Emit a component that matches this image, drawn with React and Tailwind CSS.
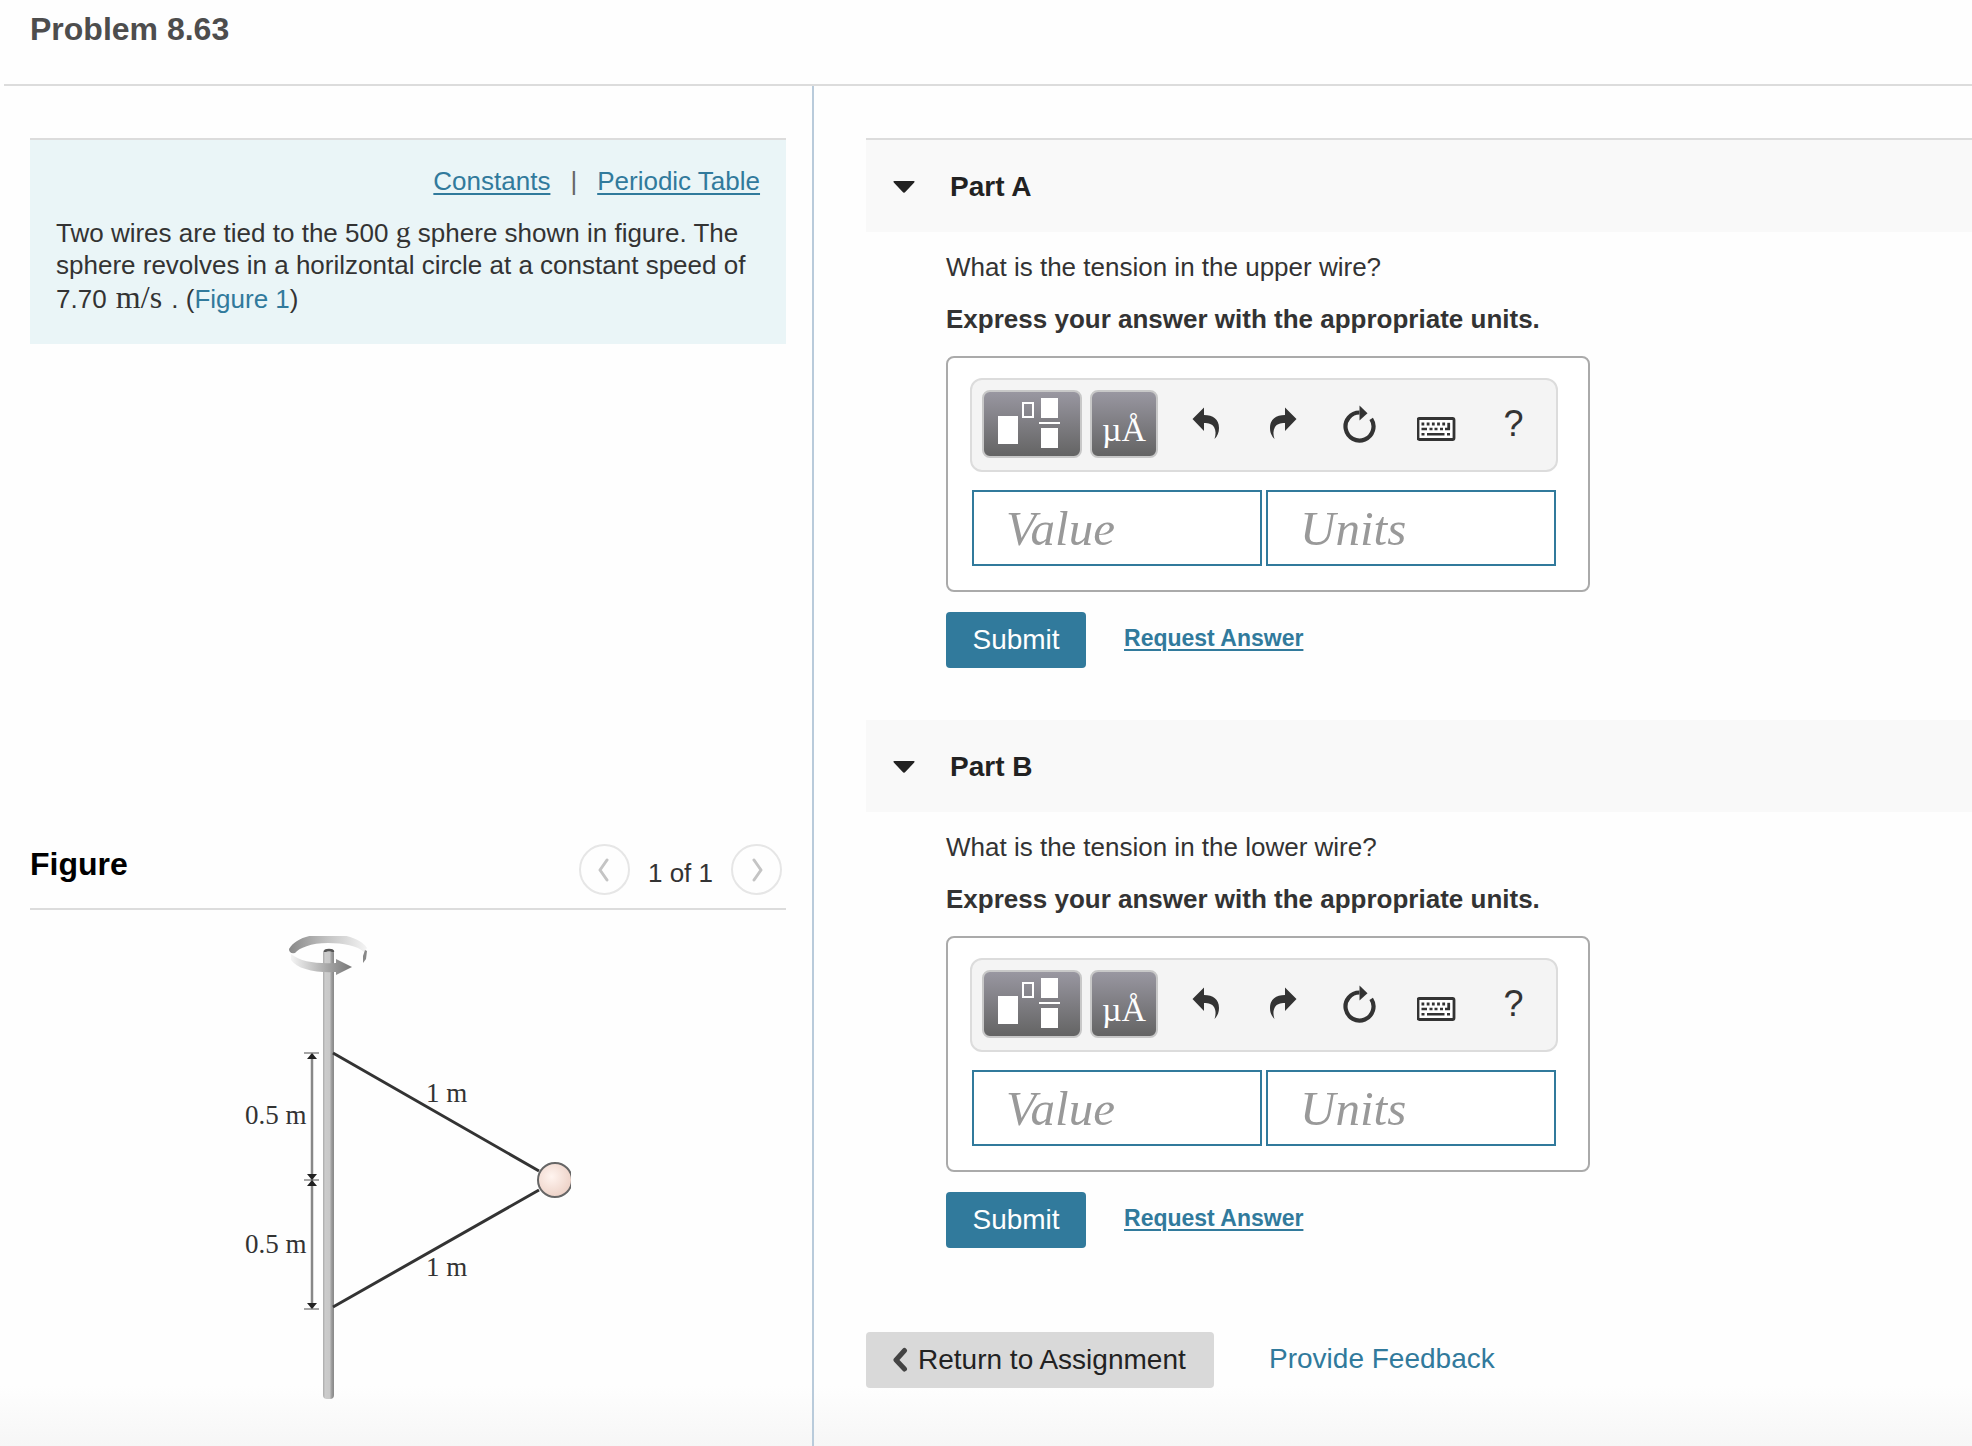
import { useState } from 'react'

const parts = [
  { id: 'a', label: 'Part A', question: 'What is the tension in the upper wire?' },
  { id: 'b', label: 'Part B', question: 'What is the tension in the lower wire?' }
]

function UndoIcon({ className }) {
  return (
    <svg viewBox="0 0 40 40" className={className} fill="#333" aria-hidden="true">
      <path d="M6.500 15 18 3.500V11C27 11 33 15 33 24C33 28.500 31.500 32 28.500 35C30 30.500 30 26.500 28 23C26 20 23 19 18 19V27Z" />
    </svg>
  )
}

function ResetIcon() {
  return (
    <svg viewBox="0 0 40 40" className="size-10" aria-hidden="true">
      <path d="M19.500 8.500A14 14 0 1 0 31.200 14.800" fill="none" stroke="#333" strokeWidth="4.200" />
      <path d="M19.500 1.500 27.500 9.300 19.500 16.500Z" fill="#333" />
    </svg>
  )
}

function KeyboardIcon() {
  return (
    <svg viewBox="0 0 40 40" className="size-10" aria-hidden="true">
      <rect x="1" y="14.500" width="36" height="21" rx="1.500" fill="#fff" stroke="#333" strokeWidth="2.800" />
      <path d="M4.500 20H28.500" stroke="#333" strokeWidth="2.800" strokeDasharray="2.800 2.400" />
      <path d="M4.500 25H10M12.500 25H15.500M17.500 25H20.500M23 25H26M28 25H33M4.500 30.300H7.500M10 30.300H27.500M30 30.300H33" stroke="#333" strokeWidth="2.600" />
      <path d="M31.700 18.800V25.500" stroke="#333" strokeWidth="2.800" />
    </svg>
  )
}

function TemplatesIcon() {
  return (
    <svg viewBox="0 0 96 64" className="h-16 w-24" fill="#fff" aria-hidden="true">
      <rect x="14" y="24" width="20" height="28" />
      <rect x="39" y="11" width="10" height="14" fill="none" stroke="#fff" strokeWidth="2" />
      <rect x="57" y="6" width="17" height="20" />
      <rect x="55" y="30" width="21" height="2" />
      <rect x="57" y="36" width="17" height="20" />
    </svg>
  )
}

function ToolButton({ label, children }) {
  return (
    <button type="button" aria-label={label} className="flex h-[68px] w-[77px] items-center justify-center text-4xl text-[#333]">
      {children}
    </button>
  )
}

function Toolbar() {
  return (
    <div className="flex rounded-xl border-2 border-[#dcdcdc] bg-[#f4f4f4] pt-[10px] pb-3 pl-[10px]">
      <button
        type="button"
        aria-label="Templates"
        className="flex h-[68px] w-[100px] items-center justify-center rounded-lg border-2 border-[#c8c8c8] bg-linear-to-b from-[#9997a1] to-[#646464]"
      >
        <TemplatesIcon />
      </button>
      <button
        type="button"
        aria-label="Symbols"
        className="mr-[9px] ml-2 flex h-[68px] w-[68px] items-center justify-center rounded-lg border-2 border-[#c8c8c8] bg-linear-to-b from-[#9997a1] to-[#646464] pt-3 font-['Liberation_Serif',serif] text-[34px] leading-none text-white"
      >
        µÅ
      </button>
      <ToolButton label="Undo"><UndoIcon className="size-10" /></ToolButton>
      <ToolButton label="Redo"><UndoIcon className="size-10 -scale-x-100" /></ToolButton>
      <ToolButton label="Reset"><ResetIcon /></ToolButton>
      <ToolButton label="Keyboard shortcuts"><KeyboardIcon /></ToolButton>
      <ToolButton label="Help">?</ToolButton>
    </div>
  )
}

function AnswerInput({ label }) {
  return (
    <input
      type="text"
      aria-label={label}
      placeholder={label}
      className="h-[76px] min-w-0 flex-1 border-2 border-[#317a9c] bg-white px-8 font-['Liberation_Serif',serif] text-[49px] text-[#333] italic placeholder:text-[#999]"
    />
  )
}

function Part({ part, first }) {
  const [open, setOpen] = useState(true)

  return (
    <section>
      <h2 className={first ? 'border-t-2 border-[#dcdcdc]' : ''}>
        <button
          type="button"
          aria-expanded={open}
          onClick={() => setOpen(!open)}
          className="flex h-[92px] w-full items-center gap-[35px] bg-[#f9f9f9] pt-px pl-[27px] text-[28px] font-bold text-[#222]"
        >
          <svg viewBox="0 0 22 12" className={`h-3 w-[22px] ${open ? '' : '-rotate-90'}`} fill="#222" aria-hidden="true">
            <path d="M1.500 0H20.500Q22.500 0 21 1.800L12.500 10.800Q11 12.500 9.500 10.800L1 1.800Q-.5 0 1.500 0Z" />
          </svg>
          {part.label}
        </button>
      </h2>

      {open && (
        <div className="pt-[19px] pb-13 pl-20">
          <p>{part.question}</p>
          <p className="mt-5 font-bold">Express your answer with the appropriate units.</p>
          <div className="mt-[21px] max-w-[644px] rounded-lg border-2 border-[#aaa] bg-white pt-5 pr-[30px] pb-6 pl-[22px]">
            <Toolbar />
            <div className="mx-0.5 mt-[18px] flex gap-1">
              <AnswerInput label="Value" />
              <AnswerInput label="Units" />
            </div>
          </div>
          <div className="mt-5 flex items-center gap-[38px]">
            <button type="button" className="h-14 w-[140px] rounded bg-[#317a9c] text-[28px] text-white">
              Submit
            </button>
            <a href="#request" className="pb-1 text-[23px] font-bold text-[#317a9c] underline decoration-2 underline-offset-3">
              Request Answer
            </a>
          </div>
        </div>
      )}
    </section>
  )
}

function PagerButton({ label, path }) {
  return (
    <button type="button" aria-label={label} className="flex size-[51px] items-center justify-center rounded-full border-2 border-[#e6e6e6]">
      <svg viewBox="0 0 24 24" className="size-6" fill="none" stroke="#c4c4c4" strokeWidth="3" strokeLinecap="round" strokeLinejoin="round" aria-hidden="true">
        <path d={path} />
      </svg>
    </button>
  )
}

function WireDiagram() {
  return (
    <svg viewBox="0 0 326 466" className="mx-auto mt-[26px] w-[326px] max-w-full" role="img" aria-label="Sphere held by two wires tied to a rotating pole">
      <defs>
        <linearGradient id="pole">
          <stop offset="0" stopColor="#aaa" />
          <stop offset=".2" stopColor="#ccc" />
          <stop offset=".6" stopColor="#c8c8c8" />
          <stop offset=".8" stopColor="#999" />
          <stop offset="1" stopColor="#888" />
        </linearGradient>
        <linearGradient id="backArc">
          <stop offset="0" stopColor="#888" />
          <stop offset=".5" stopColor="#c4c4c4" />
          <stop offset="1" stopColor="#f4f4f4" />
        </linearGradient>
        <linearGradient id="frontArc">
          <stop offset="0" stopColor="#f4f4f4" />
          <stop offset=".7" stopColor="#999" />
          <stop offset="1" stopColor="#777" />
        </linearGradient>
        <radialGradient id="ball" cx=".4" cy=".4" r=".65">
          <stop offset="0" stopColor="#fff4ef" />
          <stop offset="1" stopColor="#ecd0c5" />
        </radialGradient>
      </defs>

      <path d="M44 13C50 3 64-2 83-2C103-2 117 4 122 12L119 16C113 10 98 7 83 7C66 7 54 12 50 17Q44 18 44 13Z" fill="url(#backArc)" />
      <path d="M120 14 122 15 121 23 118 27 118 20Z" fill="#888" />
      <rect x="78" y="13" width="11" height="450" rx="4" fill="url(#pole)" />
      <path d="M80 16Q80 14 84 14T88 16" stroke="#555" strokeWidth="2.500" fill="none" />
      <path d="M46 18C56 26 72 28 91 27V23L107 31 91 39V36C70 37 52 33 46 24Z" fill="url(#frontArc)" />

      <g stroke="#888" strokeWidth="1.500">
        <path d="M67 118V372" strokeWidth="2.500" />
        <path d="M59 117H74M59 244H74M59 373H74" />
      </g>
      <path d="M67 117 72 123H62ZM67 244 62 238H72ZM67 244 72 250H62ZM67 373 62 367H72Z" fill="#222" />

      <path d="M88 117 294 235M88 371 294 254" stroke="#333" strokeWidth="3" />
      <circle cx="310" cy="244" r="17" fill="url(#ball)" stroke="#666" strokeWidth="2" />

      <g fill="#333" className="font-['Liberation_Serif',serif] text-[27px]">
        <text x="0" y="188">0.5 m</text>
        <text x="0" y="317">0.5 m</text>
        <text x="181" y="166">1 m</text>
        <text x="181" y="340">1 m</text>
      </g>
    </svg>
  )
}

export default function App() {
  return (
    <div className="flex min-h-screen flex-col bg-[linear-gradient(to_top,#f6f6f6,#fefefe_60px)] font-['Liberation_Sans',Arial,sans-serif] text-[26px] leading-8 text-[#333]">
      <header className="ml-1 border-b-2 border-[#dcdcdc] pt-[9px] pb-[35px] pl-[26px]">
        <h1 className="text-[32px] leading-10 font-bold text-[#4d4d4d]">Problem 8.63</h1>
      </header>

      <div className="flex flex-1">
        <aside className="flex w-[41.28%] shrink-0 flex-col justify-between border-r-2 border-[#b9cbdb] pt-[52px] pr-[26px] pb-11 pl-[30px]">
          <div className="border-t-2 border-[#dcdcdc] bg-[#eaf5f7] px-[26px] pt-[25px] pb-[29px]">
            <div className="flex justify-end gap-5">
              <a href="#constants" className="text-[#317a9c] underline decoration-2 underline-offset-3">Constants</a>
              <span className="text-[#666]">|</span>
              <a href="#periodic" className="text-[#317a9c] underline decoration-2 underline-offset-3">Periodic Table</a>
            </div>
            <p className="mt-5">
              Two wires are tied to the 500 <span className="font-['Liberation_Serif',serif] text-[30px] leading-none">g</span> sphere
              shown in figure. The sphere revolves in a horilzontal circle at a constant speed of 7.70{' '}
              <span className="px-0.5 font-['Liberation_Serif',serif] text-[32px] leading-none">m/s</span>{' '}
              . (<a href="#figure" className="text-[#317a9c]">Figure 1</a>)
            </p>
          </div>

          <div id="figure">
            <div className="flex items-start justify-between border-b-2 border-[#dcdcdc] pr-1 pb-[13px]">
              <h2 className="text-[32px] leading-10 font-bold text-black">Figure</h2>
              <div className="flex items-center gap-[18px]">
                <PagerButton label="Previous figure" path="M15 2 8 12 15 22" />
                <span className="pt-1.5">1 of 1</span>
                <PagerButton label="Next figure" path="M9 2 16 12 9 22" />
              </div>
            </div>
            <WireDiagram />
          </div>
        </aside>

        <main className="min-w-0 flex-1 pt-[52px] pl-13">
          {parts.map((part, i) => (
            <Part key={part.id} part={part} first={i === 0} />
          ))}
          <div className="mt-8 flex items-center gap-[55px] text-[28px]">
            <button type="button" className="flex h-14 w-[348px] items-center gap-[10px] rounded bg-[#d9d9d9] pl-[26px] text-[#222]">
              <svg viewBox="0 0 16 26" className="h-[26px] w-4" fill="none" stroke="#444" strokeWidth="5" strokeLinecap="round" strokeLinejoin="round" aria-hidden="true">
                <path d="M12.500 3.500 4 13 12.500 22" />
              </svg>
              Return to Assignment
            </button>
            <a href="#feedback" className="pb-0.5 text-[#317a9c]">Provide Feedback</a>
          </div>
        </main>
      </div>
    </div>
  )
}
